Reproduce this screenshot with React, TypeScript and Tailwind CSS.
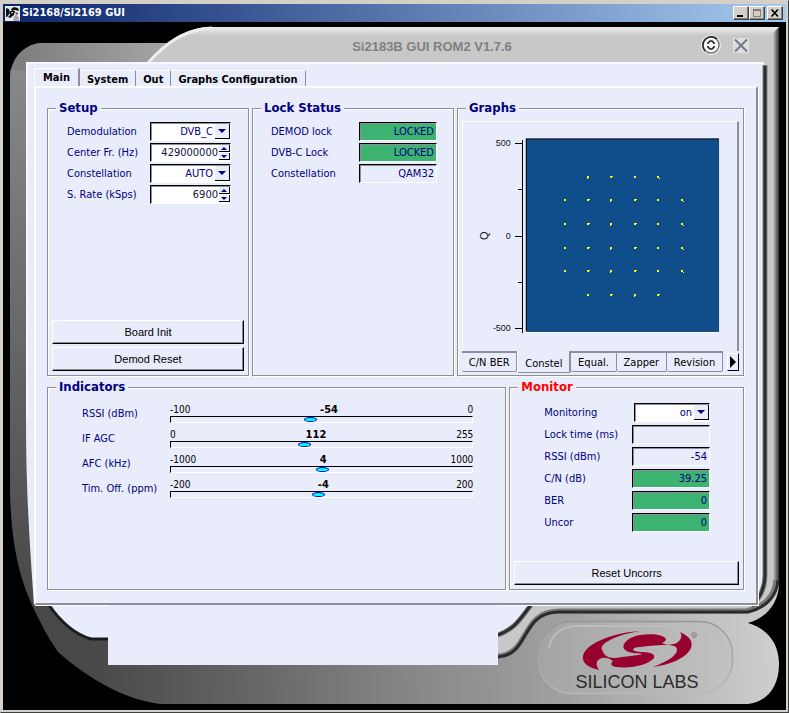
import { useState } from 'react';
import type { ReactNode } from 'react';
import { clsx } from 'clsx';

const mainTabs = ['Main', 'System', 'Out', 'Graphs Configuration'];
const graphTabs = ['C/N BER', 'Constel', 'Equal.', 'Zapper', 'Revision'];

const indicators = [
  { id: 'rssi', label: 'RSSI (dBm)', min: -100, max: 0, value: -54 },
  { id: 'ifagc', label: 'IF AGC', min: 0, max: 255, value: 112 },
  { id: 'afc', label: 'AFC (kHz)', min: -1000, max: 1000, value: 4 },
  { id: 'timoff', label: 'Tim. Off. (ppm)', min: -200, max: 200, value: -4 },
];

// QAM32: a 6x6 grid without its corners
const cols = [102, 125, 149, 173, 196, 220];
const rows = [55, 78, 102, 126, 149, 173];
const points = rows.flatMap((y, r) =>
  cols
    .filter((_, c) => !((r === 0 || r === 5) && (c === 0 || c === 5)))
    .map((x) => ({ x, y }))
);

const sunken =
  'h-[19px] w-full border border-t-black border-l-black border-b-white border-r-white shadow-[inset_1px_1px_0_#8c8e98] text-right text-[11px] leading-4 text-[#000080] outline-none';

function Group({ title, red, className, children }: { title: string; red?: boolean; className?: string; children: ReactNode }) {
  return (
    <fieldset className="min-w-0 border border-[#8c8e98] shadow-[1px_1px_0_#fff,inset_1px_1px_0_#fff]">
      <legend
        className={clsx(
          'ml-2 bg-[#e9edfb] px-[3px] text-[13px] leading-4 font-bold',
          red ? 'text-[#ff0000]' : 'text-[#000080]'
        )}
      >
        {title}
      </legend>
      <div className={clsx('flex flex-col', className)}>{children}</div>
    </fieldset>
  );
}

function Row({ id, label, field, children }: { id: string; label: string; field: string; children: ReactNode }) {
  return (
    <div className="flex items-center justify-between">
      <label htmlFor={id} className="text-[11px] leading-4 whitespace-nowrap text-[#000080]">
        {label}
      </label>
      <div className={clsx('relative shrink-0', field)}>{children}</div>
    </div>
  );
}

function Select({ id, options }: { id: string; options: string[] }) {
  return (
    <>
      <select id={id} className={clsx(sunken, 'appearance-none bg-white pr-[17px] [text-align-last:right]')}>
        {options.map((o) => (
          <option key={o}>{o}</option>
        ))}
      </select>
      <span className="pointer-events-none absolute top-[2px] right-[1px] flex h-[15px] w-[15px] items-center justify-center border-r border-b border-black bg-[#e9edfb]">
        <svg width="8" height="4" viewBox="0 0 8 4" fill="#000080">
          <path d="M0 0h8L4 4z" />
        </svg>
      </span>
    </>
  );
}

function NumberBox({ id, initial }: { id: string; initial: number }) {
  const [value, setValue] = useState(initial);
  return (
    <>
      <input
        id={id}
        value={value}
        onChange={(e) => setValue(Number(e.target.value) || 0)}
        className={clsx(sunken, 'bg-white pr-[12px] text-[#101040]')}
      />
      <span className="absolute top-[2px] right-[1px] flex flex-col gap-px">
        {[1, -1].map((step) => (
          <button
            key={step}
            type="button"
            aria-label={step > 0 ? 'Increase' : 'Decrease'}
            onClick={() => setValue(value + step)}
            className="flex h-[7px] w-[11px] items-center justify-center border-r border-b border-black bg-[#e9edfb]"
          >
            <svg width="6" height="3" viewBox="0 0 6 3" fill="#000080">
              <path d={step > 0 ? 'M0 3h6L3 0z' : 'M0 0h6L3 3z'} />
            </svg>
          </button>
        ))}
      </span>
    </>
  );
}

function ReadOnly({ id, value, ok }: { id: string; value: string; ok?: boolean }) {
  return (
    <input
      id={id}
      readOnly
      value={value}
      className={clsx(sunken, 'pr-[2px]', ok ? 'border-r-[#98fbb8] border-b-[#98fbb8] bg-[#3cb371]' : 'bg-[#e9edfb]')}
    />
  );
}

function PushButton({ children }: { children: ReactNode }) {
  return (
    <button
      type="button"
      className="h-6 w-full border border-t-white border-r-black border-b-black border-l-white bg-[#e9edfb] font-['Liberation_Sans',sans-serif] text-[11px] leading-4 text-black shadow-[inset_-1px_-1px_0_#8c8e98]"
    >
      {children}
    </button>
  );
}

function Skin() {
  return (
    <svg className="absolute inset-0 h-full w-full" viewBox="3 22 783 688" preserveAspectRatio="none" aria-hidden="true">
      <defs>
        <linearGradient id="left" gradientUnits="userSpaceOnUse" x1="0" y1="43" x2="0" y2="600">
          <stop offset="0" stopColor="#8c8c8c" />
          <stop offset="0.4" stopColor="#707070" />
          <stop offset="1" stopColor="#484848" />
        </linearGradient>
        <linearGradient id="top" gradientUnits="userSpaceOnUse" x1="10" y1="0" x2="180" y2="0">
          <stop offset="0" stopColor="#7c7c7c" />
          <stop offset="1" stopColor="#a8a8a8" />
        </linearGradient>
        <linearGradient id="bottom" gradientUnits="userSpaceOnUse" x1="90" y1="650" x2="770" y2="600">
          <stop offset="0" stopColor="#484848" />
          <stop offset="0.25" stopColor="#686868" />
          <stop offset="0.45" stopColor="#858585" />
          <stop offset="0.7" stopColor="#a2a2a2" />
          <stop offset="1" stopColor="#cecece" />
        </linearGradient>
        <linearGradient id="head" gradientUnits="userSpaceOnUse" x1="0" y1="27" x2="0" y2="36">
          <stop offset="0" stopColor="#eeeeee" />
          <stop offset="1" stopColor="#c8c8c8" />
        </linearGradient>
        <linearGradient id="edge" gradientUnits="userSpaceOnUse" x1="773" y1="0" x2="779" y2="0">
          <stop offset="0" stopColor="#c8c8c8" />
          <stop offset="1" stopColor="#303030" />
        </linearGradient>
      </defs>
      <path d="M10 76C12 56 26 43 44 43H200V620H40L33 607C24 588 11 555 10 490Z" fill="url(#left)" />
      <path d="M10 76C12 56 26 43 44 43H200V70H10Z" fill="url(#top)" />
      <path d="M146 64C166 40 186 27 212 27H779V585C778 604 766 618 748 623H560L498 662V64Z" fill="url(#head)" />
      <path d="M148 63C167 41 187 29 212 28" fill="none" stroke="#ededed" strokeWidth="3" />
      <path
        d="M32 605H110V664H498V657C530 655 520 613 558 612H748V623C766 628 779 642 779 664C779 688 766 702 748 704H160C128 700 92 682 58 652C48 638 40 622 32 605Z"
        fill="url(#bottom)"
      />
      <path d="M773 33L779 27V585H773Z" fill="url(#edge)" />
      <path d="M498 656C530 654 520 612 558 611H746C764 607 775 596 776 580" fill="none" stroke="#777" strokeWidth="5" />
      <path d="M498 657C530 655 520 613 558 612H748C766 608 777 596 778 580" fill="none" stroke="#2c2c2c" strokeWidth="3" />
      <path d="M26 62H764V575C764 590 758 600 748 606H532C520 620 515 630 498 634V639H91C72 632 60 620 49 605H34C31 560 26 500 26 420Z" fill="#e9edfb" />
      <path d="M765 65V575C765 588 760 598 752 606M531 605C520 619 516 628 498 635" fill="none" stroke="#808080" strokeWidth="5" />
      <path d="M765 66V575C765 588 760 598 752 606M531 605C520 619 516 628 498 635" fill="none" stroke="#2c2c2c" strokeWidth="3" />
      <path d="M49 605C60 621 74 634 91 639H110" fill="none" stroke="#1c1c1c" strokeWidth="3" />
      <path d="M27 420V63H764" fill="none" stroke="#f6f8ff" strokeWidth="2" />
    </svg>
  );
}

function Logo() {
  return (
    <svg className="h-[76px] w-[200px]" viewBox="536 620 200 76" role="img" aria-label="Silicon Labs">
      <defs>
        <linearGradient id="plate" x1="0" y1="0" x2="1" y2="0">
          <stop offset="0" stopColor="#a4a4a4" />
          <stop offset="1" stopColor="#c2c2c2" />
        </linearGradient>
        <linearGradient id="rim" x1="0" y1="0" x2="0" y2="1">
          <stop offset="0" stopColor="#969696" />
          <stop offset="1" stopColor="#b8b8b8" />
        </linearGradient>
      </defs>
      <rect x="538.5" y="621.5" width="194" height="72" rx="33" fill="url(#plate)" stroke="url(#rim)" strokeWidth="1.5" />
      <path d="M549 648C552 633 562 627 575 626H697C712 627 722 636 724 648" fill="none" stroke="#bdbdbd" strokeWidth="2" />
      <g fill="#98002e">
        <path d="M640 631C613 633 590 642 584 653C580 661 586 667 599 670C595 664 596 660 602 658C606 657 609 658 613 661C610 664 611 666 616 667C632 669 650 664 654 658C656 653 648 652 639 652C628 653 628 651 629 649C620 654 608 655 603 651C597 645 612 636 640 631Z" />
        <path d="M680 632C691 637 694 643 690 650C684 659 669 665 653 667C671 660 680 653 676 647C671 643 650 646 639 647C630 648 632 652 642 652C635 654 628 653 625 650C620 645 628 637 640 635C653 633 664 635 666 639C666 641 664 642 662 643C667 646 674 645 678 642C682 639 682 635 680 632Z" />
      </g>
      <path d="M603 652C601 644 616 635 632 633C622 639 620 645 625 650C630 654 640 653 643 654C634 656 628 656 622 657C612 659 606 658 603 652Z" fill="#b0b0b0" />
      <circle cx="694" cy="635" r="2.5" fill="none" stroke="#777" strokeWidth="0.7" />
      <text x="693" y="637" fontSize="4" fill="#666">R</text>
      <text x="637" y="688" textAnchor="middle" fontSize="18" fill="#2c2c2c" fontFamily="'Liberation Sans', sans-serif">
        SILICON LABS
      </text>
    </svg>
  );
}

function Constellation() {
  return (
    <svg className="block h-[229px] w-full font-['Liberation_Sans',sans-serif]" viewBox="0 0 275 229" fontSize="9" fill="#111">
      <rect x="63" y="16" width="195" height="195" fill="#fff" />
      <rect x="63" y="16" width="194" height="194" fill="#000" />
      <rect x="64" y="17" width="193" height="193" fill="#104e8b" />
      <g shapeRendering="crispEdges" fill="#000">
        <rect x="59" y="18" width="1" height="193" />
        <rect x="52" y="21" width="8" height="1" />
        <rect x="55" y="67" width="5" height="1" />
        <rect x="52" y="114" width="8" height="1" />
        <rect x="55" y="160" width="5" height="1" />
        <rect x="52" y="206" width="8" height="1" />
      </g>
      <text x="48" y="24" textAnchor="end">500</text>
      <text x="48" y="117" textAnchor="end">0</text>
      <text x="48" y="209" textAnchor="end">-500</text>
      <text x="0" y="0" fontSize="11" transform="translate(25 118) rotate(-90)">Q</text>
      <g fill="#ffff00" shapeRendering="crispEdges">
        {points.map(({ x, y }, i) => (
          <g key={i}>
            <rect x={x - 1} y={y - 1} width="2" height="2" />
            <rect x={i % 2 ? x + 1 : x - 1} y={i % 3 ? y - 1 : y + 1} width="1" height="1" />
          </g>
        ))}
      </g>
    </svg>
  );
}

function TitleBar() {
  const button =
    'flex h-[14px] w-4 items-center justify-center border border-t-white border-r-[#404040] border-b-[#404040] border-l-white bg-[#d4d0c8] shadow-[inset_-1px_-1px_0_#808080]';
  return (
    <div className="flex h-[18px] items-center bg-linear-to-r/srgb from-[#0a246a] to-[#a6caf0] pr-[3px] pl-[2px]">
      <svg width="15" height="15" viewBox="0 0 15 15" aria-hidden="true">
        <rect width="15" height="15" fill="#e8e8e8" />
        <path d="M1 2l3 1 1 4-3 4H1zM6 3l3-2 4 1 1 3-4-1-3 1z" fill="#111" />
        <path d="M5 5l5 0-1 4-4 3-2-1 2-2z" fill="#111" />
        <path d="M6 6l2 0-1 2z" fill="#ddd" />
        <path d="M9 11l2-3 3 4v3H8z" fill="#aaa" />
        <path d="M10 6l3 1-1 2z" fill="#333" />
      </svg>
      <h1 className="ml-[2px] flex-1 text-[11px] leading-4 font-bold text-white">Si2168/Si2169 GUI</h1>
      <button type="button" aria-label="Minimize" className={button}>
        <svg width="12" height="10" viewBox="0 0 12 10"><path d="M2 7h6v2H2z" /></svg>
      </button>
      <button type="button" aria-label="Maximize" className={button}>
        <svg width="12" height="10" viewBox="0 0 12 10"><path d="M2 1h8v8H2zM3 3v5h6V3z" fill="#808080" fillRule="evenodd" /></svg>
      </button>
      <button type="button" aria-label="Close" className={clsx(button, 'ml-[2px]')}>
        <svg width="12" height="10" viewBox="0 0 12 10"><path d="M2.500 1.500l6.500 7M9 1.500l-6.500 7" stroke="#000" strokeWidth="1.700" /></svg>
      </button>
    </div>
  );
}

export default function App() {
  const [tab, setTab] = useState('Main');
  const [graph, setGraph] = useState('Constel');

  return (
    <div className="flex min-h-screen flex-col border border-[#d4d0c8] border-r-[#404040] border-b-[#404040] bg-[#d4d0c8] p-[2px] pt-[3px] font-['DejaVu_Sans_Condensed','DejaVu_Sans',sans-serif] text-[11px] leading-4 text-black">
      <TitleBar />
      <div className="relative flex-1 bg-black">
        <Skin />
        <div className="relative">
          <header className="flex h-[46px] items-center pr-[37px] pl-[112px]">
            <h2 className="flex-1 pt-1 pl-[48px] text-center font-['Liberation_Sans',sans-serif] text-[13px] leading-5 font-bold text-[#808080]">
              Si2183B GUI ROM2 V1.7.6
            </h2>
            <button type="button" aria-label="Collapse">
              <svg width="20" height="20" viewBox="0 0 20 20" fill="none">
                <circle cx="10" cy="10" r="9" fill="#fff" stroke="#eee" strokeWidth="2" />
                <circle cx="10" cy="10" r="8" fill="#f8f8f8" stroke="#777" strokeWidth="1.500" />
                <path d="M4 16A8.500 8.500 0 0 1 16 4" stroke="#222" strokeWidth="1.500" />
                <path d="M7 9V8l2-2h2l2 2v1M7 11v1l2 2h2l2-2v-1" stroke="#222" strokeWidth="1.700" />
              </svg>
            </button>
            <button type="button" aria-label="Exit" className="ml-3 flex h-[15px] w-4 items-center justify-center bg-[#dedede]">
              <svg width="16" height="15" viewBox="0 0 16 15">
                <path d="M2 1.500l12 12M14 1.500l-12 12" stroke="#737889" strokeWidth="2" />
              </svg>
            </button>
          </header>

          <main className="pr-[28px] pl-[31px]">
            <div className="flex h-[18px] items-end" role="tablist">
              {mainTabs.map((name) => (
                <button
                  key={name}
                  type="button"
                  role="tab"
                  aria-selected={tab === name}
                  onClick={() => setTab(name)}
                  className={clsx(
                    'text-[11px] leading-4 font-bold whitespace-nowrap',
                    tab === name
                      ? 'h-[18px] border-t border-r-2 border-l border-t-white border-r-[#8c8e98] border-l-white px-2 pt-px'
                      : 'h-4 border-t border-r border-t-white border-r-[#8c8e98] px-[7px] pt-px'
                  )}
                >
                  {name}
                </button>
              ))}
            </div>

            <div className="flex flex-col gap-[3px] border-2 border-t-white border-r-[#8c8e98] border-b-[#8c8e98] border-l-white bg-[#e9edfb] pt-3 pr-3 pb-[13px] pl-[11px] shadow-[1px_1px_0_#fff]">
              <div className="grid grid-cols-[202fr_202fr_287fr] gap-[3px]">
                <Group title="Setup" className="h-[259px] justify-between px-1 pt-[6px] pb-1">
                  <div className="flex flex-col gap-[2px] pr-[13px] pl-[15px]">
                    <Row id="demod" label="Demodulation" field="w-[81px]">
                      <Select id="demod" options={['DVB_C', 'DVB_T', 'DVB_T2']} />
                    </Row>
                    <Row id="freq" label="Center Fr. (Hz)" field="w-[81px]">
                      <NumberBox id="freq" initial={429000000} />
                    </Row>
                    <Row id="const" label="Constellation" field="w-[81px]">
                      <Select id="const" options={['AUTO', 'QAM32', 'QAM64']} />
                    </Row>
                    <Row id="rate" label="S. Rate (kSps)" field="w-[81px]">
                      <NumberBox id="rate" initial={6900} />
                    </Row>
                  </div>
                  <div className="flex flex-col gap-[3px]">
                    <PushButton>Board Init</PushButton>
                    <PushButton>Demod Reset</PushButton>
                  </div>
                </Group>

                <Group title="Lock Status" className="gap-[2px] pt-[6px] pr-4 pl-[18px]">
                  <Row id="demodlock" label="DEMOD lock" field="w-[78px]">
                    <ReadOnly id="demodlock" value="LOCKED" ok />
                  </Row>
                  <Row id="dvbclock" label="DVB-C Lock" field="w-[78px]">
                    <ReadOnly id="dvbclock" value="LOCKED" ok />
                  </Row>
                  <Row id="lockconst" label="Constellation" field="w-[78px]">
                    <ReadOnly id="lockconst" value="QAM32" />
                  </Row>
                </Group>

                <Group title="Graphs" className="px-1 pt-[5px]">
                  <div className="border-t border-r-2 border-l border-t-white border-r-[#8c8e98] border-l-white">
                    <Constellation />
                  </div>
                  <div className="flex items-start" role="tablist">
                    {graphTabs.map((name) => (
                      <button
                        key={name}
                        type="button"
                        role="tab"
                        aria-selected={graph === name}
                        onClick={() => setGraph(name)}
                        className={clsx(
                          'flex-auto rounded-b-[2px] border-b border-[#8c8e98] text-[11px] whitespace-nowrap',
                          graph === name ? 'h-[22px] border-r-2 border-l border-l-white pt-1' : 'h-[21px] border-t-2 border-r pt-px leading-4'
                        )}
                      >
                        {name}
                      </button>
                    ))}
                    <button
                      type="button"
                      aria-label="Next tabs"
                      className="mt-[2px] ml-1 flex h-[18px] w-3 items-center justify-center border border-t-white border-r-black border-b-black border-l-white"
                    >
                      <svg width="6" height="12" viewBox="0 0 6 12"><path d="M0 0l6 6-6 6z" /></svg>
                    </button>
                  </div>
                </Group>
              </div>

              <div className="grid grid-cols-[460fr_235fr] gap-[3px]">
                <Group title="Indicators" className="gap-[2px] pt-[7px] pr-8 pl-[34px]">
                  {indicators.map(({ id, label, min, max, value }) => (
                    <div key={id} className="flex h-[23px] items-center">
                      <label htmlFor={id} className="w-[88px] shrink-0 whitespace-nowrap text-[#000080]">
                        {label}
                      </label>
                      <div className="flex-1">
                        <div className="flex justify-between text-[10px] leading-3">
                          <span>{min}</span>
                          <output htmlFor={id} className="text-[11px] font-bold">
                            {value}
                          </output>
                          <span>{max}</span>
                        </div>
                        <input
                          id={id}
                          type="range"
                          min={min}
                          max={max}
                          defaultValue={value}
                          className="block h-[7px] w-full appearance-none border border-t-black border-r-white border-b-white border-l-black bg-transparent [&::-webkit-slider-thumb]:h-[5px] [&::-webkit-slider-thumb]:w-[13px] [&::-webkit-slider-thumb]:appearance-none [&::-webkit-slider-thumb]:rounded-[50%] [&::-webkit-slider-thumb]:border [&::-webkit-slider-thumb]:border-[#0000cd] [&::-webkit-slider-thumb]:bg-[#00ffff]"
                        />
                      </div>
                    </div>
                  ))}
                </Group>

                <Group title="Monitor" red className="h-[194px] justify-between px-1 pt-2 pb-1">
                  <div className="flex flex-col gap-[3px] pr-[29px] pl-[30px]">
                    <Row id="mon" label="Monitoring" field="w-[76px]">
                      <Select id="mon" options={['on', 'off']} />
                    </Row>
                    <Row id="locktime" label="Lock time (ms)" field="w-[78px]">
                      <ReadOnly id="locktime" value="" />
                    </Row>
                    <Row id="monrssi" label="RSSI (dBm)" field="w-[78px]">
                      <ReadOnly id="monrssi" value="-54" />
                    </Row>
                    <Row id="cn" label="C/N (dB)" field="w-[78px]">
                      <ReadOnly id="cn" value="39.25" ok />
                    </Row>
                    <Row id="ber" label="BER" field="w-[78px]">
                      <ReadOnly id="ber" value="0" ok />
                    </Row>
                    <Row id="uncor" label="Uncor" field="w-[78px]">
                      <ReadOnly id="uncor" value="0" ok />
                    </Row>
                  </div>
                  <PushButton>Reset Uncorrs</PushButton>
                </Group>
              </div>
            </div>
          </main>

          <footer className="flex items-start justify-between pr-[50px] pl-[105px]">
            <div className="h-[60px] w-[390px] bg-[#e9edfb]" />
            <div className="pt-[15px]">
              <Logo />
            </div>
          </footer>
        </div>
      </div>
    </div>
  );
}
